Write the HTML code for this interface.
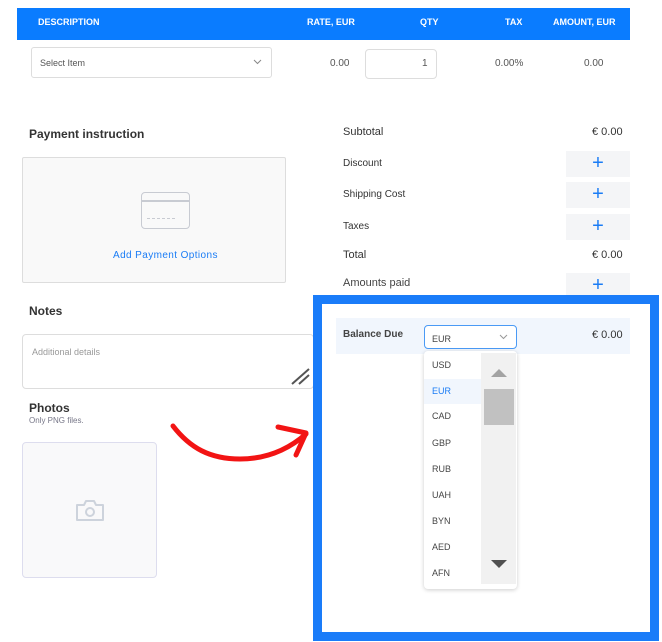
<!DOCTYPE html>
<html><head><style>
*{margin:0;padding:0;box-sizing:border-box}
body{width:662px;height:642px;background:#fff;position:relative;overflow:hidden;font-family:"Liberation Sans",sans-serif;color:#333}
.a{position:absolute}
.h{font-size:9px;font-weight:bold;color:#fff;top:17px}
.lbl{font-size:10px;color:#333}
.plus{position:absolute;left:566px;width:64px;height:26px;background:#f4f5f7;color:#1a7cf5;font-size:20px;text-align:center;line-height:25px}
.cur{position:absolute;left:432px;font-size:9px;color:#444}
</style></head><body>
<div class="a" style="left:17px;top:8px;width:613px;height:32px;background:#0a7cff"></div>
<div class="a h" style="left:38px">DESCRIPTION</div>
<div class="a h" style="left:307px">RATE, EUR</div>
<div class="a h" style="left:420px">QTY</div>
<div class="a h" style="left:505px">TAX</div>
<div class="a h" style="left:553px">AMOUNT, EUR</div>
<div class="a" style="left:31px;top:47px;width:241px;height:31px;border:1px solid #ddd;border-radius:3px"></div>
<div class="a" style="left:40px;top:58px;font-size:9px;color:#555">Select Item</div>
<svg class="a" style="left:253px;top:59px" width="9" height="6"><path d="M1 1L4.5 4.5L8 1" fill="none" stroke="#888" stroke-width="1"/></svg>
<div class="a" style="left:330px;top:58px;font-size:10px;color:#555">0.00</div>
<div class="a" style="left:365px;top:49px;width:72px;height:30px;border:1px solid #ddd;border-radius:4px"></div>
<div class="a" style="left:422px;top:58px;font-size:10px;color:#555">1</div>
<div class="a" style="left:495px;top:58px;font-size:10px;color:#555">0.00%</div>
<div class="a" style="left:584px;top:58px;font-size:10px;color:#555">0.00</div>

<div class="a" style="left:29px;top:127px;font-size:12px;font-weight:bold;color:#333">Payment instruction</div>
<div class="a" style="left:22px;top:157px;width:264px;height:126px;border:1px solid #ddd;background:#f9f9f9;border-radius:2px"></div>
<div class="a" style="left:141px;top:192px;width:49px;height:37px;border:1.5px solid #c8cbd2;border-radius:4px"></div>
<div class="a" style="left:142px;top:200px;width:47px;height:1.5px;background:#c8cbd2"></div>
<div class="a" style="left:147px;top:218px;width:28px;border-top:1.5px dashed #c8cbd2"></div>
<div class="a" style="left:113px;top:250px;font-size:10px;color:#1a7cf5;letter-spacing:0.4px">Add Payment Options</div>

<div class="a" style="left:343px;top:126px;font-size:11px;color:#333">Subtotal</div>
<div class="a" style="left:592px;top:126px;font-size:11px">€ 0.00</div>
<div class="a lbl" style="left:343px;top:158px">Discount</div>
<div class="plus" style="top:151px">+</div>
<div class="a lbl" style="left:343px;top:189px">Shipping Cost</div>
<div class="plus" style="top:182px">+</div>
<div class="a lbl" style="left:343px;top:221px">Taxes</div>
<div class="plus" style="top:214px">+</div>
<div class="a" style="left:343px;top:249px;font-size:11px">Total</div>
<div class="a" style="left:592px;top:249px;font-size:11px">€ 0.00</div>
<div class="a" style="left:343px;top:277px;font-size:11px;color:#444">Amounts paid</div>
<div class="plus" style="top:273px;height:22px">+</div>

<div class="a" style="left:29px;top:304px;font-size:12px;font-weight:bold">Notes</div>
<div class="a" style="left:22px;top:334px;width:292px;height:55px;border:1px solid #ddd;border-radius:4px"></div>
<div class="a" style="left:32px;top:347px;font-size:9px;color:#999">Additional details</div>
<svg class="a" style="left:290px;top:366px" width="24" height="20"><path d="M2 18L19 3M9 18L19 9" stroke="#555" stroke-width="2"/></svg>
<div class="a" style="left:29px;top:401px;font-size:12px;font-weight:bold">Photos</div>
<div class="a" style="left:29px;top:416px;font-size:8px;color:#778">Only PNG files.</div>
<div class="a" style="left:22px;top:442px;width:135px;height:136px;border:1px solid #dde;background:#f9f9fa;border-radius:4px"></div>
<svg class="a" style="left:75px;top:498px" width="30" height="24"><path d="M2 7h7l2-4h8l2 4h7v15H2z" fill="none" stroke="#cdd3dc" stroke-width="2" stroke-linejoin="round"/><circle cx="15" cy="14" r="4" fill="none" stroke="#cdd3dc" stroke-width="2"/></svg>

<svg class="a" style="left:0;top:0" width="662" height="642"><path d="M173 426C190 448 210 459 240 459C268 459 290 448 306 434" fill="none" stroke="#f21414" stroke-width="5" stroke-linecap="round"/><path d="M278 427L306 433L296 455" fill="none" stroke="#f21414" stroke-width="5" stroke-linecap="round" stroke-linejoin="round"/></svg>

<div class="a" style="left:313px;top:295px;width:346px;height:346px;border:9px solid #1a7cf9"></div>
<div class="a" style="left:336px;top:318px;width:294px;height:36px;background:#f1f6fd"></div>
<div class="a" style="left:343px;top:329px;font-size:10px;font-weight:bold;color:#444">Balance Due</div>
<div class="a" style="left:592px;top:329px;font-size:11px">€ 0.00</div>
<div class="a" style="left:424px;top:325px;width:93px;height:24px;border:1.5px solid #4a9af5;border-radius:4px;background:#fff"></div>
<div class="a" style="left:432px;top:334px;font-size:9px;color:#444">EUR</div>
<svg class="a" style="left:499px;top:334px" width="9" height="6"><path d="M1 1L4.5 4.5L8 1" fill="none" stroke="#999" stroke-width="1"/></svg>
<div class="a" style="left:424px;top:351px;width:93px;height:238px;background:#fff;border-radius:4px;box-shadow:0 1px 4px rgba(0,0,0,.2)"></div>
<div class="a" style="left:424px;top:379px;width:57px;height:25px;background:#f1f6fd"></div>
<div class="a" style="left:481px;top:353px;width:35px;height:231px;background:#f1f1f1"></div>
<div class="a" style="left:484px;top:389px;width:30px;height:36px;background:#c1c1c1"></div>
<svg class="a" style="left:490px;top:368px" width="18" height="10"><path d="M1 9L9 1L17 9z" fill="#a3a3a3"/></svg>
<svg class="a" style="left:490px;top:559px" width="18" height="10"><path d="M1 1L9 9L17 1z" fill="#505050"/></svg>
<div class="cur" style="top:360px">USD</div>
<div class="cur" style="top:386px;color:#1a7cf5">EUR</div>
<div class="cur" style="top:411px">CAD</div>
<div class="cur" style="top:438px">GBP</div>
<div class="cur" style="top:464px">RUB</div>
<div class="cur" style="top:490px">UAH</div>
<div class="cur" style="top:516px">BYN</div>
<div class="cur" style="top:542px">AED</div>
<div class="cur" style="top:568px">AFN</div>
</body></html>
